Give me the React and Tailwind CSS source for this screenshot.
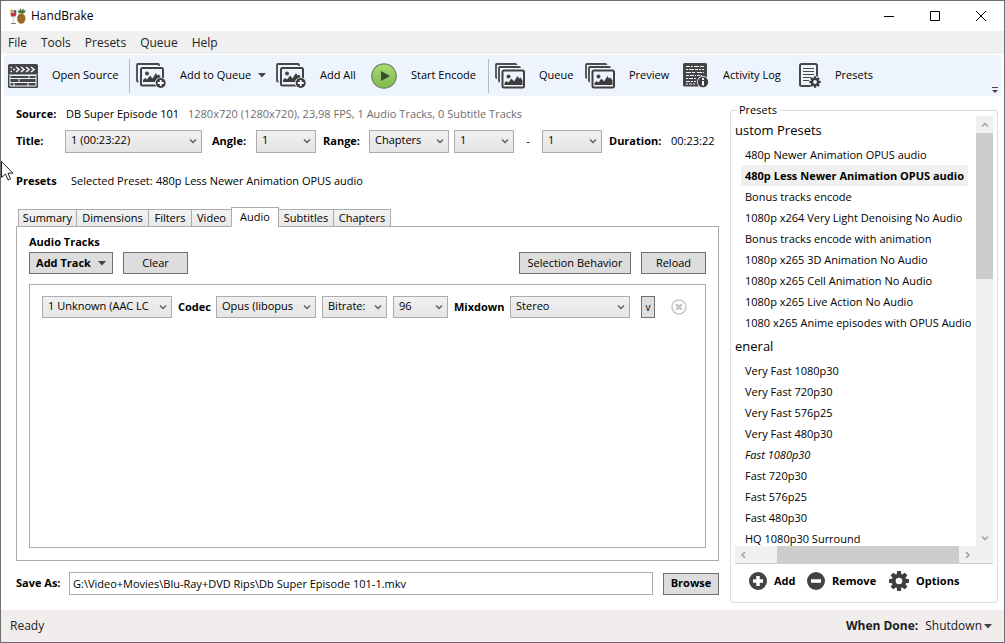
import React from 'react';

const GROUPS = [
  {
    name: 'ustom Presets',
    items: [
      '480p Newer Animation OPUS audio',
      '480p Less Newer Animation OPUS audio',
      'Bonus tracks encode',
      '1080p x264 Very Light Denoising No Audio',
      'Bonus tracks encode with animation',
      '1080p x265 3D Animation No Audio',
      '1080p x265 Cell Animation No Audio',
      '1080p x265 Live Action No Audio',
      '1080 x265 Anime episodes with OPUS Audio',
    ],
  },
  {
    name: 'eneral',
    items: [
      'Very Fast 1080p30',
      'Very Fast 720p30',
      'Very Fast 576p25',
      'Very Fast 480p30',
      'Fast 1080p30',
      'Fast 720p30',
      'Fast 576p25',
      'Fast 480p30',
      'HQ 1080p30 Surround',
    ],
  },
];

const SELECTED = '480p Less Newer Animation OPUS audio';
const DEFAULT_PRESET = 'Fast 1080p30';

const TABS = [
  { name: 'Summary', width: 'w-[59px]' },
  { name: 'Dimensions', width: 'w-[73px]' },
  { name: 'Filters', width: 'w-[44px]' },
  { name: 'Video', width: 'w-[41px]' },
  { name: 'Audio', width: 'w-[48px]' },
  { name: 'Subtitles', width: 'w-[56px]' },
  { name: 'Chapters', width: 'w-[58px]' },
];

function Triangle() {
  return (
    <svg className="shrink-0" width="8" height="5" viewBox="0 0 8 5" aria-hidden="true">
      <path d="M0 0h8L4 4.5z" fill="#444" />
    </svg>
  );
}

function Chevron({ className, d = 'M1 1.5l3 3 3-3' }) {
  return (
    <svg className={className} width="8" height="6" viewBox="0 0 8 6" aria-hidden="true">
      <path d={d} fill="none" stroke="currentColor" strokeWidth="1.5" />
    </svg>
  );
}

function AppLogo() {
  return (
    <svg width="17" height="17" viewBox="0 0 17 17" aria-hidden="true">
      <path d="M9.5 5l-1-3 2 1 .5-3 1.500 2.500L14.500 .5l.2 2.200L17 2l-1.800 3.500z" fill="#3f7a3a" />
      <ellipse cx="12.300" cy="10.500" rx="4.200" ry="5.200" fill="#a8752c" />
      <path d="M9 8l6 6M8.500 11l4 4M11 6l5 5M15 7l-6 6M13 5.500L8.500 10M16 10l-5 5" stroke="#74501c" strokeWidth=".6" />
      <path d="M.8 3.500h7L6.800 8.500 4.800 10v4.500l2 1.500H2.200l1.600-1.500V10L1.800 8.500z" fill="#c9cfd6" />
      <path d="M1.500 5h6L6.500 8.300H2.300z" fill="#c92f35" />
      <path d="M1 3l2-2 2 2-2 2z" fill="#e5a42e" />
      <circle cx="6" cy="3.500" r="1.400" fill="#3f55a5" />
      <path d="M2.200 15.500h4.600" stroke="#777" strokeWidth="1" />
    </svg>
  );
}

function ClapperIcon() {
  return (
    <svg width="30" height="24" viewBox="0 0 30 24" aria-hidden="true">
      <rect width="30" height="24" rx="1.500" fill="#454545" />
      <g fill="none" stroke="#eef4fd" strokeWidth="1.600">
        <path d="M8 3l3 2.500L8 8M13 3l3 2.500L13 8M18 3l3 2.500L18 8M23 3l3 2.500L23 8" />
        <path d="M2.500 3.500h1.500M2.500 7.500h1.500M5 5.500h2" />
      </g>
      <path d="M0 10.500h30" stroke="#eef4fd" strokeWidth="1" opacity=".5" />
      <path d="M2 14.500h26M2 18.500h26M11 14.500v4M21 14.500v-3M6 18.500v4M20 18.500v4" fill="none" stroke="#eef4fd" strokeWidth="1" />
      <path d="M2 11.500h26v10.500H2z" fill="none" stroke="#eef4fd" strokeWidth="1" />
    </svg>
  );
}

function Landscape() {
  return (
    <>
      <circle cx="4" cy="3.500" r="2" fill="#454545" />
      <path d="M0 12V10l2-2 2 1.500 3-4 2.500 3L13 3l1.500 2.500L16 4.500l2 3V12z" fill="#3d3d3d" />
    </>
  );
}

function AddImageIcon() {
  return (
    <svg width="30" height="26" viewBox="0 0 30 26" aria-hidden="true">
      <path d="M2.500 18.500H2Q1 18.500 1 17.500V2Q1 1 2 1H22Q23 1 23 2V3" fill="none" stroke="#484848" strokeWidth="1.800" />
      <rect x="5" y="5" width="22" height="17.500" rx="1.500" fill="#eef4fd" stroke="#424242" strokeWidth="2" />
      <g transform="translate(7 7)">
        <Landscape />
      </g>
      <circle cx="24.700" cy="20" r="5.800" fill="#eef4fd" />
      <circle cx="24.700" cy="20" r="5" fill="#3d3d3d" />
      <path d="M24.700 17v6M21.700 20h6" stroke="#fff" strokeWidth="1.800" />
    </svg>
  );
}

function ImagesIcon() {
  return (
    <svg width="30" height="26" viewBox="0 0 30 26" aria-hidden="true">
      <path d="M2 15Q1 15 1 14V2Q1 1 2 1H20Q21.500 1 21.500 2" fill="none" stroke="#4c4c4c" strokeWidth="1.800" />
      <path d="M5 18.500Q4 18.500 4 17.500V5Q4 4 5 4H24Q25 4 25 5" fill="none" stroke="#464646" strokeWidth="1.800" />
      <rect x="7.500" y="7.500" width="21.500" height="17" rx="1.500" fill="#eef4fd" stroke="#404040" strokeWidth="2" />
      <g transform="translate(9.500 10)">
        <Landscape />
      </g>
    </svg>
  );
}

function PlayIcon() {
  return (
    <svg width="26" height="26" viewBox="0 0 26 26" aria-hidden="true">
      <defs>
        <linearGradient id="play" x1="0" y1="0" x2="0" y2="1">
          <stop offset="0" stopColor="#a9dc75" />
          <stop offset=".5" stopColor="#93c962" />
          <stop offset="1" stopColor="#7fbb4e" />
        </linearGradient>
      </defs>
      <circle cx="13" cy="13" r="12.200" fill="url(#play)" stroke="#75876a" strokeWidth="1.300" />
      <path d="M10 8l9 5-9 5z" fill="#3b4a30" />
    </svg>
  );
}

function LogIcon() {
  return (
    <svg width="26" height="25" viewBox="0 0 26 25" aria-hidden="true">
      <rect width="24" height="23.500" rx="1.500" fill="#454545" />
      <g stroke="#eef4fd" strokeWidth="1">
        <path d="M3 3.500h18" strokeDasharray="4 1 2 1 5 1" />
        <path d="M3 6.500h18" strokeDasharray="2 1 5 1 3 1" />
        <path d="M3 9.500h18" strokeDasharray="5 1 3 2" />
        <path d="M3 12.500h16" strokeDasharray="3 1 4 1 1 1" />
        <path d="M3 15.500h11" strokeDasharray="2 1 4 1" />
        <path d="M3 18.500h10" strokeDasharray="4 1 2 1" />
        <path d="M3 21h10" strokeDasharray="2 1 3 1" />
      </g>
      <circle cx="20" cy="19" r="6" fill="#eef4fd" />
      <circle cx="20" cy="19" r="5.200" fill="#3d3d3d" />
      <path d="M20 15v2M20 18v4.500" stroke="#fff" strokeWidth="2" />
    </svg>
  );
}

function GearShape({ hole }) {
  return (
    <>
      <g fill="#3d3d3d">
        <circle r="7" />
        <path d="M-1.800-10h3.600l.7 4h-5zM-1.800 10h3.600l.7-4h-5zM-10-1.800v3.600l4 .7v-5zM10-1.800v3.600l-4 .7v-5z" />
        <path transform="rotate(45)" d="M-1.800-10h3.600l.7 4h-5zM-1.800 10h3.600l.7-4h-5zM-10-1.800v3.600l4 .7v-5zM10-1.800v3.600l-4 .7v-5z" />
      </g>
      <circle r="3.300" fill={hole} />
    </>
  );
}

function PresetsIcon() {
  return (
    <svg width="22" height="25" viewBox="0 0 22 25" aria-hidden="true">
      <rect x="1" y="1" width="17" height="22" rx="1.500" fill="#eef4fd" stroke="#484848" strokeWidth="2" />
      <path d="M4 5.500h11M4 8.500h11M4 11.500h11M4 14.500h8M4 17.500h6" stroke="#484848" strokeWidth="1.200" />
      <circle cx="16" cy="19" r="6" fill="#eef4fd" />
      <g transform="translate(16 19) scale(.57)">
        <GearShape hole="#eef4fd" />
      </g>
    </svg>
  );
}

function RoundIcon({ minus }) {
  return (
    <svg width="18" height="18" viewBox="0 0 18 18" aria-hidden="true">
      <circle cx="9" cy="9" r="9" fill="#434343" />
      <path d={minus ? 'M4 9h10' : 'M9 4v10M4 9h10'} stroke="#fff" strokeWidth="3.500" />
    </svg>
  );
}

function ToolButton({ icon, label, width, menu }) {
  return (
    <button className={`flex h-full shrink-0 items-center gap-[14px] text-left whitespace-nowrap ${width}`}>
      {icon}
      <span className="flex items-center gap-[7px]">
        {label}
        {menu && <Triangle />}
      </span>
    </button>
  );
}

function Dropdown({ label, value, width, grow }) {
  return (
    <div className={`relative shrink-0 ${width}`}>
      <select
        aria-label={label}
        className={`w-full appearance-none border border-[#acacac] bg-linear-to-b from-[#f0f0f0] to-[#e5e5e5] pr-5 pb-0.5 pl-[5px] ${grow ? 'h-[23px]' : 'h-[22px]'}`}
        defaultValue={value}
      >
        <option>{value}</option>
      </select>
      <Chevron className="pointer-events-none absolute top-2 right-[5px] text-[#606060]" />
    </div>
  );
}

function PushButton({ children, width }) {
  return (
    <button className={`flex h-[22px] shrink-0 items-center justify-center gap-[7px] border border-[#707070] bg-[#dddddd] ${width}`}>
      {children}
    </button>
  );
}

function TitleBar() {
  return (
    <div className="flex h-[30px] shrink-0 items-center bg-white pl-2 text-xs">
      <AppLogo />
      <span className="ml-[5px] flex-1">HandBrake</span>
      <button aria-label="Minimize" className="flex h-full w-[46px] items-center justify-center">
        <svg width="10" height="10"><path d="M0 5.500h10" stroke="#000" /></svg>
      </button>
      <button aria-label="Maximize" className="flex h-full w-[46px] items-center justify-center">
        <svg width="10" height="10"><path d="M.5.500h9v9h-9z" fill="none" stroke="#000" /></svg>
      </button>
      <button aria-label="Close" className="flex h-full w-[46px] items-center justify-center">
        <svg width="10" height="10"><path d="M0 0l10 10M10 0L0 10" stroke="#000" /></svg>
      </button>
    </div>
  );
}

function Toolbar() {
  return (
    <div className="mx-[3px] mt-px flex h-[41px] shrink-0 items-center rounded-[3px] bg-[#eef4fd] pl-1">
      <ToolButton icon={<ClapperIcon />} label="Open Source" width="w-[121px]" />
      <div className="mr-1.5 h-[34px] w-px bg-[#b4bac3]" />
      <ToolButton icon={<AddImageIcon />} label="Add to Queue" width="w-[140px]" menu />
      <ToolButton icon={<AddImageIcon />} label="Add All" width="w-[95px]" />
      <ToolButton icon={<PlayIcon />} label="Start Encode" width="w-[117px]" />
      <div className="mr-1.5 h-[34px] w-px bg-[#b4bac3]" />
      <ToolButton icon={<ImagesIcon />} label="Queue" width="w-[90px]" />
      <ToolButton icon={<ImagesIcon />} label="Preview" width="w-[98px]" />
      <ToolButton icon={<LogIcon />} label="Activity Log" width="w-[116px]" />
      <ToolButton icon={<PresetsIcon />} label="Presets" width="w-[90px]" />
      <button aria-label="Toolbar options" className="mr-[3px] mb-[3px] ml-auto self-end">
        <svg width="6" height="6"><path d="M0 .5h6" stroke="#444" /><path d="M0 3h6L3 6z" fill="#444" /></svg>
      </button>
    </div>
  );
}

function AudioPanel() {
  return (
    <div className="flex flex-1 flex-col border border-[#acacac] px-3 pt-2 pb-3">
      <h2 className="h-[17px] leading-[14px] font-bold">Audio Tracks</h2>
      <div className="flex gap-2.5">
        <PushButton width="w-[84px]">
          <span className="font-bold">Add Track</span>
          <Triangle />
        </PushButton>
        <PushButton width="w-[65px]">Clear</PushButton>
        <div className="flex-1" />
        <PushButton width="w-[112px]">Selection Behavior</PushButton>
        <PushButton width="w-[65px]">Reload</PushButton>
      </div>
      <div className="mt-2.5 flex-1 border border-[#acacac] px-3 pt-[11px]">
        <div className="flex items-center gap-1.5">
          <Dropdown label="Source track" value="1 Unknown (AAC LC" width="w-[130px]" />
          <span className="w-8 font-bold">Codec</span>
          <Dropdown label="Codec" value="Opus (libopus" width="w-[100px]" />
          <Dropdown label="Quality mode" value="Bitrate:" width="w-[65px]" />
          <Dropdown label="Bitrate" value="96" width="w-[55px]" />
          <span className="w-[50px] font-bold">Mixdown</span>
          <Dropdown label="Mixdown" value="Stereo" width="w-[120px]" />
          <button className="ml-[5px] h-[22px] w-3.5 border border-[#707070] bg-[#dddddd] text-[10px]">v</button>
          <button aria-label="Remove track" className="ml-2.5">
            <svg width="16" height="16" viewBox="0 0 16 16">
              <circle cx="8" cy="8" r="7" fill="none" stroke="#c9c9c9" strokeWidth="1.600" />
              <path d="M5.200 5.200l5.600 5.600M10.800 5.200l-5.600 5.600" stroke="#c0c0c0" strokeWidth="2.200" />
            </svg>
          </button>
        </div>
      </div>
    </div>
  );
}

function PresetsPane() {
  return (
    <fieldset className="flex w-[268px] shrink-0 flex-col rounded-[3px] border border-[#d5dfe5] px-1">
      <legend className="ml-px px-[3px] leading-4">Presets</legend>
      <div className="-mt-0.5 flex min-h-0 flex-1">
        <div className="h-0 min-h-full flex-1 overflow-hidden pt-px whitespace-nowrap">
          {GROUPS.map((group) => (
            <div key={group.name}>
              <h3 className="h-[27px] text-[13px] leading-[27px]">{group.name}</h3>
              <ul className="ml-1.5">
                {group.items.map((item) => (
                  <li
                    key={item}
                    className={`h-[21px] w-max px-1 leading-[21px] ${item === SELECTED ? 'bg-[#f0f0f0] font-bold' : ''} ${item === DEFAULT_PRESET ? 'italic' : ''}`}
                  >
                    {item}
                  </li>
                ))}
              </ul>
            </div>
          ))}
        </div>
        <div className="flex w-[17px] flex-col bg-[#f0f0f0] text-[#a0a0a0]">
          <div className="flex h-[17px] items-center justify-center"><Chevron d="M1 4.500l3-3 3 3" /></div>
          <div className="h-[146px] bg-[#cdcdcd]" />
          <div className="mt-auto flex h-[17px] items-center justify-center"><Chevron /></div>
        </div>
      </div>
      <div className="flex h-[18px] border-b border-[#cdcdcd] bg-[#f0f0f0] pr-[17px] text-[#a0a0a0]">
        <div className="flex w-[42px] items-center pl-[5px]"><Chevron d="M5 0L2 3l3 3" /></div>
        <div className="flex-1 bg-[#cdcdcd]" />
        <div className="flex w-[17px] items-center justify-center"><Chevron d="M2 0l3 3-3 3" /></div>
      </div>
      <div className="flex h-[38px] items-center pb-1 pl-3.5 font-bold">
        <button className="flex w-[58px] items-center gap-[7px]"><RoundIcon /> Add</button>
        <button className="flex w-[82px] items-center gap-[7px]"><RoundIcon minus /> Remove</button>
        <button className="flex items-center gap-[7px]">
          <svg width="20" height="20" viewBox="-10 -10 20 20" aria-hidden="true"><GearShape hole="#fff" /></svg>
          Options
        </button>
      </div>
    </fieldset>
  );
}

export default function App() {
  return (
    <div className="relative flex h-screen flex-col border border-[#6e6e6e] bg-white font-['Open_Sans','Noto_Sans',sans-serif] text-[11px] text-black">
      <TitleBar />
      <nav className="flex h-[23px] shrink-0 items-center gap-[14px] bg-[#f0f0f0] pl-[7px] text-xs text-[#222]">
        <button>File</button>
        <button>Tools</button>
        <button>Presets</button>
        <button>Queue</button>
        <button>Help</button>
      </nav>
      <Toolbar />
      <main className="flex min-h-0 flex-1 gap-[11px] pt-1.5 pr-1.5 pb-[7px] pl-[15px]">
        <div className="flex min-w-0 flex-1 flex-col">
          <div className="flex h-6 items-center whitespace-nowrap">
            <span className="w-[50px] font-bold">Source:</span>
            <span className="w-[122px]">DB Super Episode 101</span>
            <span className="text-[#6d6d6d]">1280x720 (1280x720), 23,98 FPS, 1 Audio Tracks, 0 Subtitle Tracks</span>
          </div>
          <div className="mt-1 flex items-center">
            <span className="w-[49px] font-bold">Title:</span>
            <Dropdown label="Title" value="1 (00:23:22)" width="w-[137px]" grow />
            <span className="ml-2.5 w-11 font-bold">Angle:</span>
            <Dropdown label="Angle" value="1" width="w-[60px]" grow />
            <span className="ml-[7px] w-[46px] font-bold">Range:</span>
            <Dropdown label="Range" value="Chapters" width="w-20" grow />
            <div className="w-[5px]" />
            <Dropdown label="From" value="1" width="w-[60px]" grow />
            <span className="w-7 text-center">-</span>
            <Dropdown label="To" value="1" width="w-[60px]" grow />
            <span className="ml-[7px] w-[62px] font-bold">Duration:</span>
            <span>00:23:22</span>
          </div>
          <div className="mt-4 flex h-6 items-center whitespace-nowrap">
            <span className="w-[55px] font-bold">Presets</span>
            <span className="w-[85px]">Selected Preset:</span>
            <span>{SELECTED}</span>
          </div>
          <div role="tablist" className="relative mt-3.5 -mb-px ml-0.5 flex h-5 items-end">
            {TABS.map((tab) => (
              <button
                key={tab.name}
                role="tab"
                aria-selected={tab.name === 'Audio'}
                className={`-mr-px border border-[#acacac] text-center ${tab.width} ${tab.name === 'Audio' ? 'h-5 border-b-white bg-white' : 'h-[18px] bg-linear-to-b from-[#f3f3f3] to-[#e8e8e8]'}`}
              >
                {tab.name}
              </button>
            ))}
          </div>
          <AudioPanel />
          <div className="mt-[11px] mb-2 flex items-center">
            <label htmlFor="save" className="w-[53px] font-bold">Save As:</label>
            <input
              id="save"
              className="mr-2.5 h-[23px] min-w-0 flex-1 border border-[#abadb3] px-[3px]"
              defaultValue="G:\Video+Movies\Blu-Ray+DVD Rips\Db Super Episode 101-1.mkv"
            />
            <PushButton width="w-14"><span className="font-bold">Browse</span></PushButton>
          </div>
        </div>
        <PresetsPane />
      </main>
      <footer className="flex h-8 shrink-0 items-center bg-[#f0edec] pr-3 pl-[9px] text-xs text-[#222]">
        <span className="flex-1">Ready</span>
        <span className="mr-[7px] font-bold">When Done:</span>
        <button className="flex items-center gap-0.5">
          Shutdown
          <Triangle />
        </button>
      </footer>
      <svg className="pointer-events-none absolute top-[160px] left-0" width="13" height="20" viewBox="0 0 13 20" aria-hidden="true">
        <path d="M.5.500v16l4-3.500 2.500 6 2.500-1-2.500-5.800h5z" fill="#fff" stroke="#222" />
      </svg>
    </div>
  );
}
